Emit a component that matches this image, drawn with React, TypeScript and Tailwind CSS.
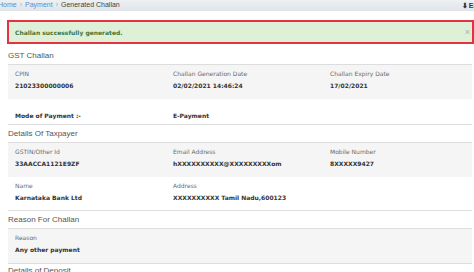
const ROWS_GST = [
  [
    { label: 'CPIN', value: '21023300000006' },
    { label: 'Challan Generation Date', value: '02/02/2021 14:46:24' },
    { label: 'Challan Expiry Date', value: '17/02/2021' },
  ],
]

const ROWS_TAXPAYER = [
  [
    { label: 'GSTIN/Other Id', value: '33AACCA1121E9ZF' },
    { label: 'Email Address', value: 'hXXXXXXXXXX@XXXXXXXXXom' },
    { label: 'Mobile Number', value: '8XXXXX9427' },
  ],
  [
    { label: 'Name', value: 'Karnataka Bank Ltd' },
    { label: 'Address', value: 'XXXXXXXXXX Tamil Nadu,600123' },
  ],
]

type Cell = { label: string; value: string }

function Row({ cells, grey, h }: { cells: Cell[]; grey: boolean; h: string }) {
  return (
    <div
      className={`grid grid-cols-[158px_157px_1fr] pl-[7px] pt-[4px] ${h} ${
        grey ? 'bg-[#f5f5f5]' : 'bg-white'
      }`}
    >
      {cells.map((c) => (
        <div key={c.label} className="flex flex-col whitespace-nowrap">
          <span className="text-[6px] leading-[10px] text-[#6a6a6a]">{c.label}</span>
          <span className="text-[6px] leading-[14px] font-bold text-[#333]">{c.value}</span>
        </div>
      ))}
    </div>
  )
}

function Heading({ children, cls }: { children: string; cls: string }) {
  return (
    <div className={`pl-[8px] text-[8px] text-[#555] font-['Liberation_Sans',Arial,sans-serif] ${cls}`}>
      {children}
    </div>
  )
}

export default function App() {
  return (
    <div className="w-[474px] h-[272px] overflow-hidden bg-white font-['DejaVu_Sans',Verdana,sans-serif]">
      {/* breadcrumb */}
      <div className="h-[11px] bg-gradient-to-b from-[#eef0f3] to-[#e0e4e9] flex items-center justify-between overflow-hidden font-['Liberation_Sans',Arial,sans-serif] text-[7px] leading-none">
        <div className="flex items-center gap-[3px] -ml-[2px] -mt-[2px]">
          <span className="text-[#5a8fcf]">Home</span>
          <span className="text-[#aaa]">›</span>
          <span className="text-[#5a8fcf]">Payment</span>
          <span className="text-[#aaa]">›</span>
          <span className="text-[#444]">Generated Challan</span>
        </div>
        <div className="flex items-center gap-[1px] -mr-[20px] -mt-[1px] text-[#333] font-bold">
          <span className="text-[7px]">⬇</span>
          <span>English</span>
        </div>
      </div>

      {/* alert */}
      <div className="mt-[9px] ml-[7px] h-[24px] border-2 border-[#e2333f] bg-[#dff0d8] flex items-center justify-between pl-[6px] pr-[2px]">
        <span className="text-[6px] font-bold text-[#3c763d]">Challan successfully generated.</span>
        <span className="text-[9px] leading-none text-[#aab0a8] font-['Liberation_Sans',Arial,sans-serif]">×</span>
      </div>

      <Heading cls="mt-[3px] h-[17px] leading-[17px]">GST Challan</Heading>
      <div className="ml-[8px] mr-[2px] border-y border-[#dddddd]">
        <Row cells={ROWS_GST[0]} grey h="h-[34px]" />
        <div className="h-[25px] bg-white grid grid-cols-[158px_157px_1fr] pl-[7px] pt-[10px] text-[6px] leading-[14px] font-bold text-[#333]">
          <span>Mode of Payment :-</span>
          <span>E-Payment</span>
        </div>
      </div>

      <Heading cls="h-[17px] leading-[17px]">Details Of Taxpayer</Heading>
      <div className="ml-[8px] mr-[2px] border-y border-[#dddddd]">
        <Row cells={ROWS_TAXPAYER[0]} grey h="h-[34px]" />
        <Row cells={ROWS_TAXPAYER[1]} grey={false} h="h-[33px]" />
      </div>

      <Heading cls="h-[17px] leading-[17px]">Reason For Challan</Heading>
      <div className="ml-[8px] mr-[2px] border-y border-[#dddddd]">
        <Row cells={[{ label: 'Reason', value: 'Any other payment' }]} grey h="h-[34px]" />
      </div>

      <Heading cls="h-[17px] leading-[14px]">Details of Deposit</Heading>
    </div>
  )
}
